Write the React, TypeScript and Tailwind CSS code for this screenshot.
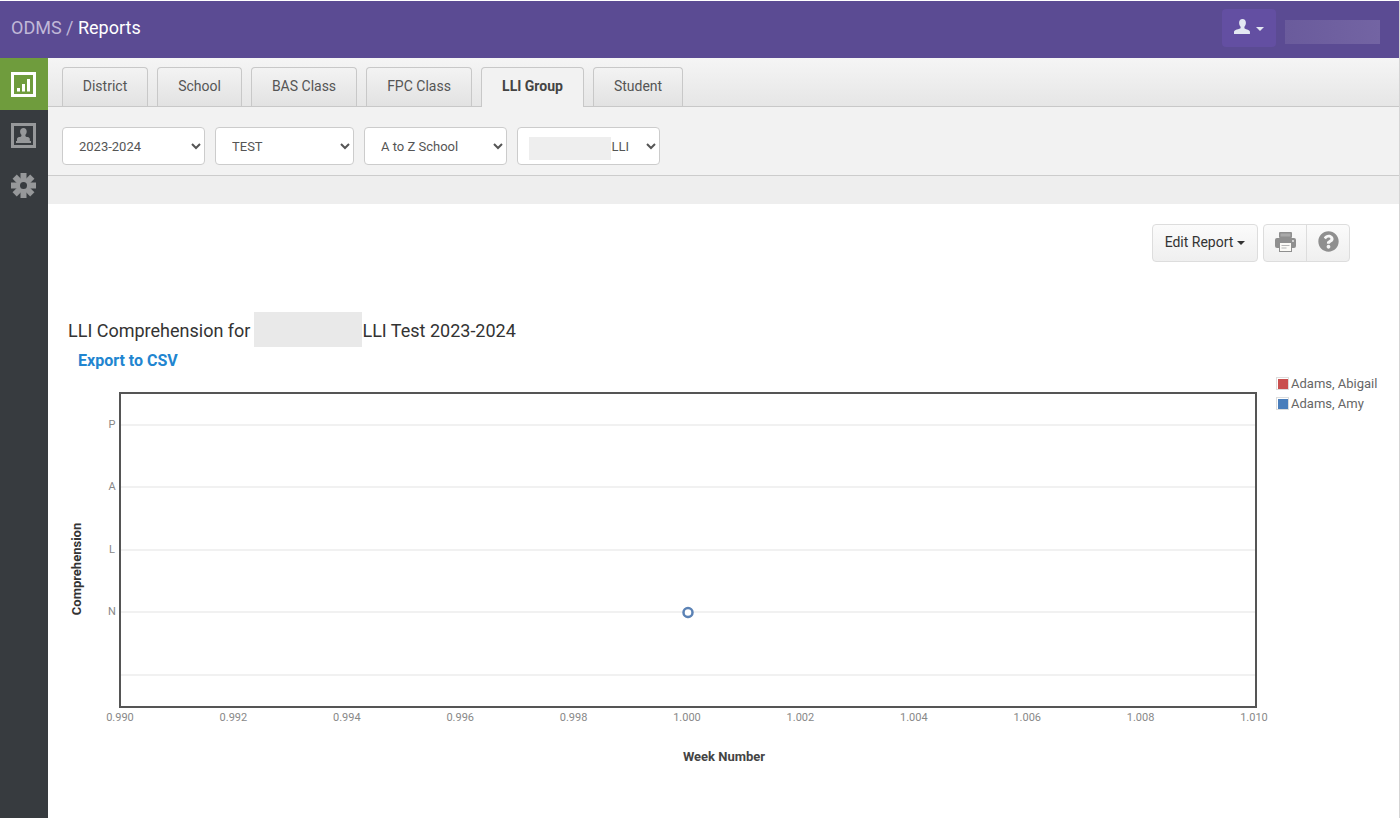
import { FaQuestionCircle } from "react-icons/fa";

const tabs = [
  { name: "District", w: "w-[86px]" },
  { name: "School", w: "w-[85px]" },
  { name: "BAS Class", w: "w-[106px]" },
  { name: "FPC Class", w: "w-[106px]" },
  { name: "LLI Group", w: "w-[103px]", active: true },
  { name: "Student", w: "w-[90px]" },
];

const yLabels = [
  { t: "P", y: 425 },
  { t: "A", y: 487 },
  { t: "L", y: 550 },
  { t: "N", y: 612 },
  { t: "", y: 675 },
];

const xLabels = ["0.990", "0.992", "0.994", "0.996", "0.998", "1.000", "1.002", "1.004", "1.006", "1.008", "1.010"];

function PersonGlyph({ className }: { className?: string }) {
  return (
    <svg viewBox="0 0 16 14" className={className} fill="currentColor">
      <path d="M8 0c2 0 3.200 1.400 3.200 3.400 0 1.500-.6 3-1.400 3.800v1.200c0 .6 1 .9 2.600 1.500 1.500.6 2.400 1.200 2.600 2.100V14H.0v-2c.2-.9 1.100-1.500 2.600-2.100C4.200 9.300 6.200 9 6.200 8.400V7.200C5.400 6.400 4.800 4.900 4.800 3.400 4.800 1.400 6 0 8 0z" />
    </svg>
  );
}

function PrinterGlyph() {
  return (
    <svg width="21" height="20" viewBox="0 0 21 20">
      <rect x="4" y="0" width="13" height="6" rx="1" fill="#8f8f8f" />
      <rect x="5.500" y="1.500" width="10" height="3" fill="#a9a9a9" />
      <rect x="0" y="6" width="21" height="10" rx="2" fill="#8f8f8f" />
      <rect x="4.500" y="10.500" width="12" height="9" fill="#fbfaf6" stroke="#8f8f8f" />
      <rect x="6.500" y="13" width="8" height="1" fill="#b5b5b5" />
      <rect x="6.500" y="15.500" width="5" height="1" fill="#b5b5b5" />
      <circle cx="18" cy="9" r="1" fill="#e6e6e6" />
    </svg>
  );
}

function SideIcons() {
  return (
    <div className="w-12 shrink-0 bg-[#373b3f] flex flex-col pl-[11px]">
      <div className="w-12 h-[52px] -ml-[11px] pl-[11px] bg-[#6f9c3d] flex items-center">
        <svg width="25" height="25" viewBox="0 0 25 25">
          <rect x="1.500" y="1.500" width="22" height="22" fill="none" stroke="#fff" strokeWidth="3" />
          <rect x="6" y="16" width="3" height="3.500" fill="#fff" />
          <rect x="11" y="12" width="3" height="7.500" fill="#fff" />
          <rect x="16" y="7" width="3" height="12.500" fill="#fff" />
        </svg>
      </div>
      <div className="mt-[13px]">
        <svg width="25" height="25" viewBox="0 0 25 25" fill="#96989a">
          <rect x="1.500" y="1.500" width="22" height="22" fill="none" stroke="#96989a" strokeWidth="3" />
          <path d="M12.500 5c2 0 3.200 1.500 3.200 3.400 0 1.500-.6 2.700-1.300 3.400v1.100c0 .5 1 .8 2.300 1.200 1.200.4 2 .9 2.100 1.700V18H6v-2.200c.1-.8.9-1.300 2.100-1.700 1.300-.4 2.300-.7 2.300-1.200v-1.100c-.7-.7-1.300-1.900-1.300-3.400C9.100 6.500 10.500 5 12.500 5z" />
          <rect x="5" y="18" width="15" height="2" />
        </svg>
      </div>
      <div className="mt-[25px]">
        <svg width="25" height="25" viewBox="0 0 25 25" fill="#96989a">
          {[0, 45, 90, 135].map((a) => (
            <rect key={a} x="9.500" y="0" width="6" height="25" transform={`rotate(${a} 12.500 12.500)`} />
          ))}
          <circle cx="12.500" cy="12.500" r="7" fill="#96989a" />
          <circle cx="12.500" cy="12.500" r="3.500" fill="#373b3f" />
        </svg>
      </div>
    </div>
  );
}

function Chart() {
  return (
    <svg width="1352" height="400" viewBox="48 376 1352 400" className="block" style={{ fontFamily: "Roboto, sans-serif" }}>
      {yLabels.map((l) => (
        <g key={l.y}>
          <line x1="120" x2="1256" y1={l.y} y2={l.y} stroke="#e3e3e3" strokeWidth="1" />
          <text x="112" y={l.y + 3} textAnchor="middle" fontSize="11" fill="#888">{l.t}</text>
        </g>
      ))}
      <rect x="120" y="393" width="1136" height="314" fill="none" stroke="#555" strokeWidth="2" />
      {xLabels.map((t, i) => (
        <text key={t} x={120 + i * 113.4} y="721" textAnchor="middle" fontSize="11" fill="#888">{t}</text>
      ))}
      <text x="724" y="761" textAnchor="middle" fontSize="13" fontWeight="700" fill="#444">Week Number</text>
      <text transform="translate(81 569) rotate(-90)" textAnchor="middle" fontSize="13" fontWeight="700" fill="#333">Comprehension</text>
      <circle cx="688" cy="613.500" r="5" fill="#000" opacity="0.1" />
      <circle cx="688" cy="612.500" r="4.500" fill="#fff" stroke="#5b82b5" strokeWidth="2.500" />
      <rect x="1276.500" y="377.500" width="12" height="12" fill="#fff" stroke="#ddd" />
      <rect x="1278" y="379" width="10" height="10" fill="#c9504f" />
      <text x="1291" y="388" fontSize="13" fill="#666">Adams, Abigail</text>
      <rect x="1276.500" y="397.500" width="12" height="12" fill="#fff" stroke="#ddd" />
      <rect x="1278" y="399" width="10" height="10" fill="#4a7ebb" />
      <text x="1291" y="408" fontSize="13" fill="#666">Adams, Amy</text>
    </svg>
  );
}

export default function App() {
  return (
    <div className="h-[818px] w-[1400px] overflow-hidden bg-white pt-px font-['Roboto',sans-serif] text-[#333] border-r border-[#d5d5d5]">
      {/* Top bar */}
      <header className="h-[57px] bg-[#5b4b93] flex items-center justify-between pl-[11px] pr-[19px]">
        <div className="text-[18px] text-[#c0b8d8] -mt-[5px]">
          ODMS / <span className="text-white">Reports</span>
        </div>
        <div className="flex items-center gap-[9px] -mt-[3px]">
          <div className="w-[54px] h-[38px] rounded bg-[#634fa2] flex items-center justify-center gap-[5px] text-[#e3e8f2]">
            <PersonGlyph className="w-[17px] h-[15px] -mt-[3px]" />
            <span className="border-x-4 border-t-4 border-x-transparent border-t-[#e3e8f2] mt-px" />
          </div>
          <div className="w-[95px] h-6 mt-2 bg-gradient-to-r from-[#6a5b9c] to-[#7364a3]" />
        </div>
      </header>

      <div className="flex h-[760px]">
        <SideIcons />
        <main className="flex-1 min-w-0">
          {/* Tabs */}
          <div className="h-[49px] bg-gradient-to-b from-[#f5f5f5] to-[#e6e6e6] border-b border-[#c8c8c8] pl-[14px] pt-[9px] flex gap-[9px]">
            {tabs.map((tab) => (
              <div
                key={tab.name}
                className={
                  tab.active
                    ? `${tab.w} h-10 pb-[3px] rounded-t border border-b-0 border-[#c8c8c8] bg-[#f2f2f2] text-[14px] font-bold text-[#444] flex items-center justify-center`
                    : `${tab.w} h-[39px] pb-[2px] rounded-t border border-b-0 border-[#c8c8c8] bg-gradient-to-b from-[#f3f3f3] to-[#e2e2e2] text-[14px] text-[#555] flex items-center justify-center`
                }
              >
                {tab.name}
              </div>
            ))}
          </div>

          {/* Filters */}
          <div className="h-[69px] bg-[#f2f2f2] border-b border-[#ccc] pl-[14px] pt-5 flex gap-[10px] text-[13px] text-[#555]">
            <select className="w-[143px] h-[38px] rounded border border-[#ccc] bg-white pl-3">
              <option>2023-2024</option>
            </select>
            <select className="w-[139px] h-[38px] rounded border border-[#ccc] bg-white pl-3">
              <option>TEST</option>
            </select>
            <select className="w-[143px] h-[38px] rounded border border-[#ccc] bg-white pl-3">
              <option>A to Z School</option>
            </select>
            <div className="relative">
              <select className="w-[143px] h-[38px] rounded border border-[#ccc] bg-white pl-3">
                <option>{"\u00a0".repeat(24)}LLI</option>
              </select>
              <div className="absolute left-3 top-[10px] w-[82px] h-[23px] bg-[#eeeeee]" />
            </div>
          </div>
          <div className="h-7 bg-[#eeeeee]" />

          {/* Report */}
          <div className="flex justify-end gap-[5px] pr-[49px] pt-5">
            <button className="w-[106px] h-[38px] pb-px rounded border border-[#ddd] bg-gradient-to-b from-[#fbfbfb] to-[#efefef] text-[14px] text-[#333] flex items-center justify-center gap-1">
              Edit Report
              <span className="border-x-4 border-t-4 border-x-transparent border-t-[#333]" />
            </button>
            <div className="flex h-[38px] rounded border border-[#ddd] bg-gradient-to-b from-[#fbfbfb] to-[#efefef]">
              <div className="w-[43px] flex items-center justify-center border-r border-[#ddd] pb-[3px]">
                <PrinterGlyph />
              </div>
              <div className="w-[42px] flex items-center justify-center text-[#8f8f8f] pb-[3px]">
                <FaQuestionCircle size={21} />
              </div>
            </div>
          </div>

          <h2 className="mt-[50px] ml-5 h-[35px] flex items-center text-[18px] leading-none">
            <span className="mt-[2px]">LLI Comprehension for</span>
            <span className="w-[108px] h-[35px] ml-1 bg-[#e9e9e9]" />
            <span className="mt-[2px]">LLI Test 2023-2024</span>
          </h2>
          <a className="block ml-[30px] mt-[2px] h-[23px] leading-[23px] text-[16px] font-bold text-[#2185d0]">Export to CSV</a>
          <div className="mt-1">
            <Chart />
          </div>
        </main>
      </div>
    </div>
  );
}
